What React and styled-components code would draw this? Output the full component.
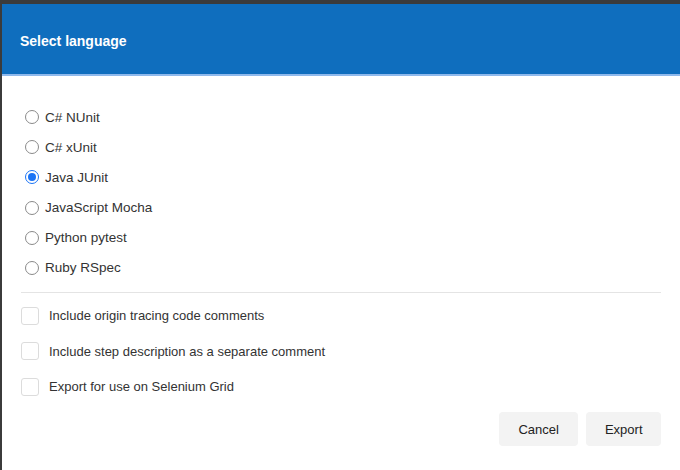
import styled, { createGlobalStyle } from 'styled-components';

const GlobalStyle = createGlobalStyle`
  html, body {
    margin: 0;
    padding: 0;
    background: #3b3b3b;
  }
  body {
    font-family: 'Liberation Sans', Arial, sans-serif;
  }
`

const Frame = styled.div`
  width: 680px;
  height: 470px;
  box-sizing: border-box;
  padding: 4px 0 0 2px;
  background: #3b3b3b;
  overflow: hidden;
`

const Dialog = styled.div`
  height: 100%;
  background: #fff;
  display: flex;
  flex-direction: column;
`

const Header = styled.div`
  height: 72px;
  box-sizing: border-box;
  background: #0f6ebe;
  border-bottom: 2px solid #8fb9ec;
  display: flex;
  align-items: center;
  padding: 3px 18px 0;

  h2 {
    margin: 0;
    color: #fff;
    font-size: 14px;
    font-weight: 700;
  }
`

const Body = styled.div`
  flex: 1;
  display: flex;
  flex-direction: column;
  padding: 32px 19px 24px 19px;
`

const RadioList = styled.div`
  display: flex;
  flex-direction: column;
  gap: 12.2px;
  padding-bottom: 15px;
`

const RadioRow = styled.label`
  display: flex;
  align-items: center;
  height: 18px;
  gap: 6px;
  padding-left: 4px;
  font-size: 13.5px;
  color: #333;
`

const Radio = styled.span`
  width: 14px;
  height: 14px;
  border-radius: 50%;
  box-sizing: border-box;
  border: 1px solid ${ p => p.checked ? '#1a73f5' : '#8a8a8a' };
  display: flex;
  align-items: center;
  justify-content: center;
  background: #fff;

  &::after {
    content: '';
    width: 8px;
    height: 8px;
    border-radius: 50%;
    background: ${ p => p.checked ? '#1a73f5' : 'transparent' };
  }
`

const Divider = styled.hr`
  border: none;
  border-top: 1px solid #e4e4e4;
  margin: 0 0 14px 0;
`

const CheckList = styled.div`
  display: flex;
  flex-direction: column;
  gap: 17.5px;
`

const CheckRow = styled.label`
  display: flex;
  align-items: center;
  gap: 10px;
  font-size: 13px;
  color: #333;
`

const Box = styled.span`
  width: 18px;
  height: 18px;
  box-sizing: border-box;
  border: 1px solid #dcdcdc;
  border-radius: 3px;
  background: #fff;
`

const Footer = styled.div`
  margin-top: auto;
  display: flex;
  justify-content: flex-end;
  gap: 8px;
`

const Button = styled.button`
  height: 34px;
  padding: 0 ${ p => p.wide ? 19.5 : 18.5 }px;
  border: none;
  border-radius: 4px;
  background: #f3f3f3;
  font-family: 'Liberation Sans', Arial, sans-serif;
  font-size: 13px;
  color: #222;
`

const languages = ['C# NUnit', 'C# xUnit', 'Java JUnit', 'JavaScript Mocha', 'Python pytest', 'Ruby RSpec']
const options = [
  'Include origin tracing code comments',
  'Include step description as a separate comment',
  'Export for use on Selenium Grid',
]

export default function App() {
  return (
    <Frame>
      <GlobalStyle />
      <Dialog>
        <Header>
          <h2>Select language</h2>
        </Header>
        <Body>
          <RadioList>
            { languages.map(item => (
              <RadioRow key={ item }>
                <Radio checked={ item === 'Java JUnit' } />
                { item }
              </RadioRow>
            ))}
          </RadioList>
          <Divider />
          <CheckList>
            { options.map(item => (
              <CheckRow key={ item }>
                <Box />
                { item }
              </CheckRow>
            ))}
          </CheckList>
          <Footer>
            <Button wide>Cancel</Button>
            <Button>Export</Button>
          </Footer>
        </Body>
      </Dialog>
    </Frame>
  )
}
